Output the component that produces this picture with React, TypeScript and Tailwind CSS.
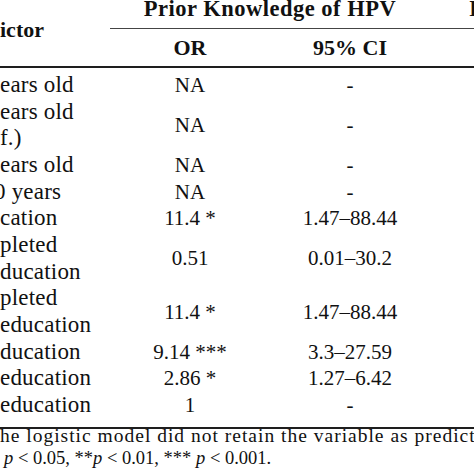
import React from 'react';

type Row = {
  label: string[];
  or: string;
  ci: string;
  shift?: boolean;
};

const rows: Row[] = [
  { label: ['ears old'], or: 'NA', ci: '-' },
  { label: ['ears old', 'f.)'], or: 'NA', ci: '-' },
  { label: ['ears old'], or: 'NA', ci: '-' },
  { label: ['0 years'], or: 'NA', ci: '-', shift: true },
  { label: ['cation'], or: '11.4 *', ci: '1.47–88.44' },
  { label: ['pleted', 'ducation'], or: '0.51', ci: '0.01–30.2' },
  { label: ['pleted', 'education'], or: '11.4 *', ci: '1.47–88.44' },
  { label: ['ducation'], or: '9.14 ***', ci: '3.3–27.59' },
  { label: ['education'], or: '2.86 *', ci: '1.27–6.42' },
  { label: ['education'], or: '1', ci: '-' },
];

export default function App() {
  return (
    <div className="h-[474px] w-[474px] overflow-hidden bg-white font-['Liberation_Serif',serif] text-[#111]">
      {/* header */}
      <div className="flex h-[66px]">
        <div className="flex w-[110px] shrink-0 items-center pb-[6px]">
          <span className="text-[22px] leading-[24px] font-bold">ictor</span>
        </div>
        <div className="flex flex-1 flex-col">
          <div className="flex h-[29px] border-b border-[#444]">
            <div className="w-[320px] shrink-0 text-center text-[22.5px] leading-[18px] font-bold tracking-[0.5px]">
              Prior Knowledge of HPV
            </div>
            <div className="flex-1 pl-[39px] text-[22.5px] leading-[18px] font-bold whitespace-nowrap">
              I
            </div>
          </div>
          <div className="flex flex-1 items-center text-[22px] leading-[24px] font-bold">
            <div className="w-[160px] text-center">OR</div>
            <div className="w-[160px] text-center">95% CI</div>
          </div>
        </div>
      </div>
      <div className="h-[2px] bg-[#1e1e1e]" />

      {/* body */}
      <div className="pt-[4px]">
        {rows.map((row, i) => (
          <div key={i} className="flex items-center">
            <div className="w-[110px] shrink-0 text-[23px] leading-[26.67px] tracking-[0.2px] whitespace-nowrap">
              {row.label.map((line, j) => (
                <div key={j} className={row.shift ? '-ml-[6px]' : ''}>
                  {line}
                </div>
              ))}
            </div>
            <div className="w-[160px] text-center text-[21px] leading-[26.67px]">
              {row.or}
            </div>
            <div className="w-[160px] text-center text-[21px] leading-[26.67px]">
              {row.ci}
            </div>
          </div>
        ))}
      </div>
      <div className="mt-[8px] h-[2px] bg-[#1e1e1e]" />

      {/* footnote */}
      <div className="text-[19.5px] leading-[14px] tracking-[1px] whitespace-nowrap">
        he logistic model did not retain the variable as predictor.
      </div>
      <div className="mt-[4px] pl-[4px] text-[18.5px] leading-[22px] whitespace-nowrap">
        <i>p</i> &lt; 0.05, **<i>p</i> &lt; 0.01, *** <i>p</i> &lt; 0.001.
      </div>
    </div>
  );
}
